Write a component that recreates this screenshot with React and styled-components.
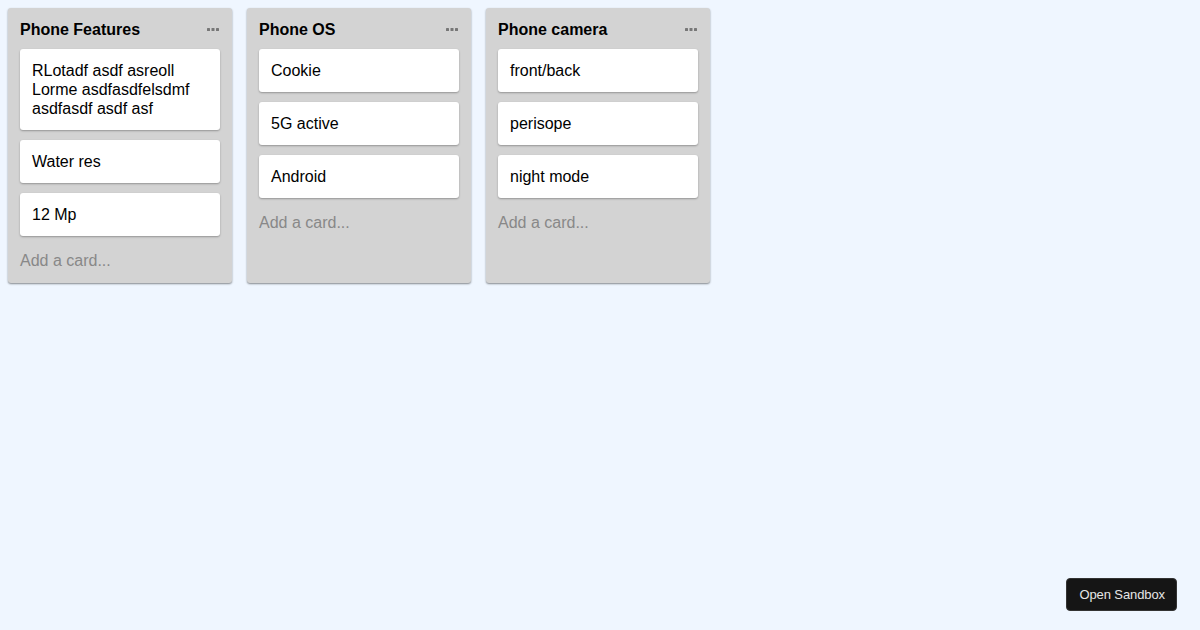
import React from "react";
import styled, { createGlobalStyle } from "styled-components";

const GlobalStyle = createGlobalStyle`
  body {
    margin: 0;
    background: #eff6ff;
    font-family: "Liberation Sans", Arial, sans-serif;
    color: #000;
  }
`;

const Board = styled.div`
  display: flex;
  align-items: flex-start;
  gap: 15px;
  padding: 8px;
  box-sizing: border-box;
  height: 630px;
`;

const Lane = styled.section`
  width: 224px;
  box-sizing: border-box;
  height: ${(p) => p.height}px;
  background: #d3d3d3;
  border-radius: 3px;
  box-shadow: 0 1px 2px rgba(0, 0, 0, 0.45);
  padding: 12px 12px 12px;
  display: flex;
  flex-direction: column;
`;

const LaneHeader = styled.header`
  display: flex;
  align-items: center;
  justify-content: space-between;
  height: 20px;
  margin-bottom: 9px;
`;

const Title = styled.h3`
  margin: 0;
  font-size: 16px;
  font-weight: bold;
`;

const MoreButton = styled.span`
  display: flex;
  align-items: center;
  margin-right: 1px;
  margin-top: -2px;
`;

const CardList = styled.div`
  display: flex;
  flex-direction: column;
  gap: 10px;
`;

const Card = styled.article`
  background: #fff;
  border-radius: 3px;
  box-shadow: 0 1px 2px rgba(0, 0, 0, 0.3);
  padding: 12px;
  font-size: 16px;
  line-height: 19px;
`;

const AddCard = styled.a`
  margin-top: 15px;
  font-size: 16px;
  line-height: 19px;
  color: #888;
  cursor: pointer;
`;

const SandboxButton = styled.button`
  position: fixed;
  right: 23px;
  bottom: 19px;
  height: 33px;
  padding: 0 11px 0 12px;
  background: #151515;
  color: #e6e6e6;
  border: 1px solid #333;
  border-radius: 4px;
  font-family: "Liberation Sans", Arial, sans-serif;
  font-size: 13px;
  letter-spacing: -0.1px;
`;

const Dots = () => (
  <svg width="12" height="5" viewBox="0 0 12 5">
    <rect x="0" y="1" width="3" height="3" rx="0.5" fill="#777" />
    <rect x="4.5" y="1" width="3" height="3" rx="0.5" fill="#777" />
    <rect x="9" y="1" width="3" height="3" rx="0.5" fill="#777" />
  </svg>
);

const lanes = [
  {
    title: "Phone Features",
    cards: [
      ["RLotadf asdf asreoll", "Lorme asdfasdfelsdmf", "asdfasdf asdf asf"],
      ["Water res"],
      ["12 Mp"],
    ],
  },
  {
    title: "Phone OS",
    cards: [["Cookie"], ["5G active"], ["Android"]],
  },
  {
    title: "Phone camera",
    cards: [["front/back"], ["perisope"], ["night mode"]],
  },
];

export default function App() {
  return (
    <>
      <GlobalStyle />
      <Board>
        {lanes.map((lane) => (
          <Lane key={lane.title} height={275}>
            <LaneHeader>
              <Title>{lane.title}</Title>
              <MoreButton>
                <Dots />
              </MoreButton>
            </LaneHeader>
            <CardList>
              {lane.cards.map((lines, i) => (
                <Card key={i}>
                  {lines.map((l, j) => (
                    <div key={j}>{l}</div>
                  ))}
                </Card>
              ))}
            </CardList>
            <AddCard>Add a card...</AddCard>
          </Lane>
        ))}
      </Board>
      <SandboxButton>Open Sandbox</SandboxButton>
    </>
  );
}
